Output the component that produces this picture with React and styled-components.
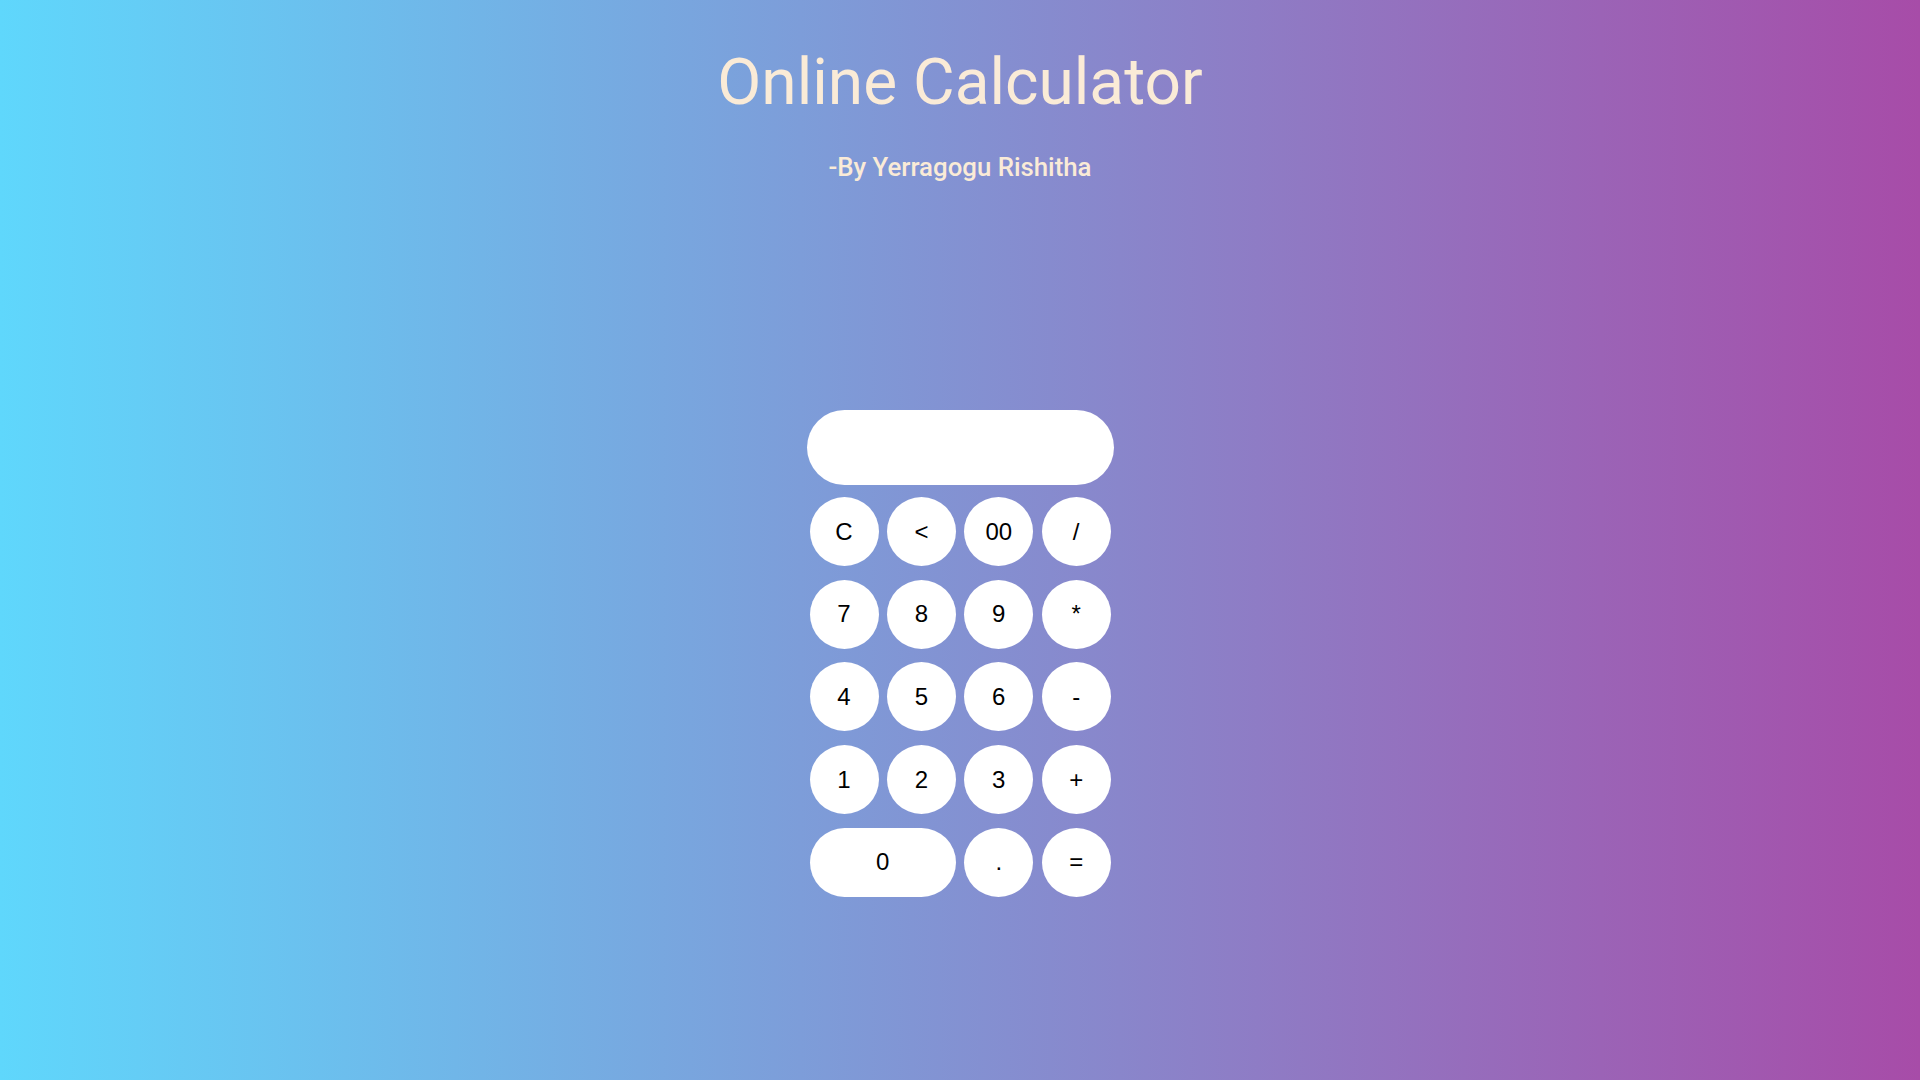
import React, { useState } from 'react'
import styled, { createGlobalStyle } from 'styled-components'

const GlobalStyle = createGlobalStyle`
  * { box-sizing: border-box; }
  html, body { margin: 0; padding: 0; }
  body {
    min-height: 100vh;
    background: linear-gradient(to right, #5fd7fc, #a74ca8);
    font-family: Roboto, "Liberation Sans", sans-serif;
  }
`

const keys = [
  'C', '<', '00', '/',
  '7', '8', '9', '*',
  '4', '5', '6', '-',
  '1', '2', '3', '+',
  '0', '.', '=',
]

const App = () => {
  const [value, setValue] = useState('')

  const press = (k) => {
    if (k === 'C') return setValue('')
    if (k === '<') return setValue((v) => v.slice(0, -1))
    if (k === '=') {
      try {
        // eslint-disable-next-line no-new-func
        setValue(String(Function('return (' + value + ')')()))
      } catch (e) {
        setValue('Error')
      }
      return
    }
    setValue((v) => v + k)
  }

  return (
    <Page>
      <GlobalStyle />
      <Title>Online Calculator</Title>
      <Byline>-By Yerragogu Rishitha</Byline>
      <Calculator>
        <Display value={value} readOnly />
        <Keys>
          {keys.map((k) => (
            <Key key={k} wide={k === '0' ? 1 : 0} onClick={() => press(k)}>
              {k}
            </Key>
          ))}
        </Keys>
      </Calculator>
    </Page>
  )
}

export default App

const Page = styled.div`
  min-height: 100vh;
  display: flex;
  flex-direction: column;
  align-items: center;
  padding-top: 43px;
`

const Title = styled.h1`
  margin: 0;
  font-family: Roboto, "Liberation Sans", sans-serif;
  font-weight: 400;
  font-size: 64px;
  line-height: 80px;
  color: antiquewhite;
`

const Byline = styled.h3`
  margin: 29px 0 0 0;
  font-family: Roboto, "Liberation Sans", sans-serif;
  font-weight: 500;
  font-size: 25.8px;
  line-height: 30px;
  color: antiquewhite;
`

const Calculator = styled.div`
  margin-top: 228px;
  width: 307px;
  display: flex;
  flex-direction: column;
  gap: 12px;
`

const Display = styled.input`
  width: 307px;
  height: 75px;
  border: none;
  outline: none;
  border-radius: 40px;
  background: #fff;
  padding: 0 30px;
  font-family: "Liberation Sans", Arial, sans-serif;
  font-size: 32px;
  text-align: right;
`

const Keys = styled.div`
  display: grid;
  grid-template-columns: repeat(4, 69px);
  grid-auto-rows: 69px;
  column-gap: 8.4px;
  row-gap: 13.7px;
  padding: 0 3px;
`

const Key = styled.button`
  grid-column: ${(p) => (p.wide ? 'span 2' : 'auto')};
  border: none;
  border-radius: 35px;
  background: #fff;
  color: #000;
  font-family: "Liberation Sans", Arial, sans-serif;
  font-size: 24px;
  cursor: pointer;
  padding: 0;

  &:hover {
    background: #f2f2f2;
  }
`
